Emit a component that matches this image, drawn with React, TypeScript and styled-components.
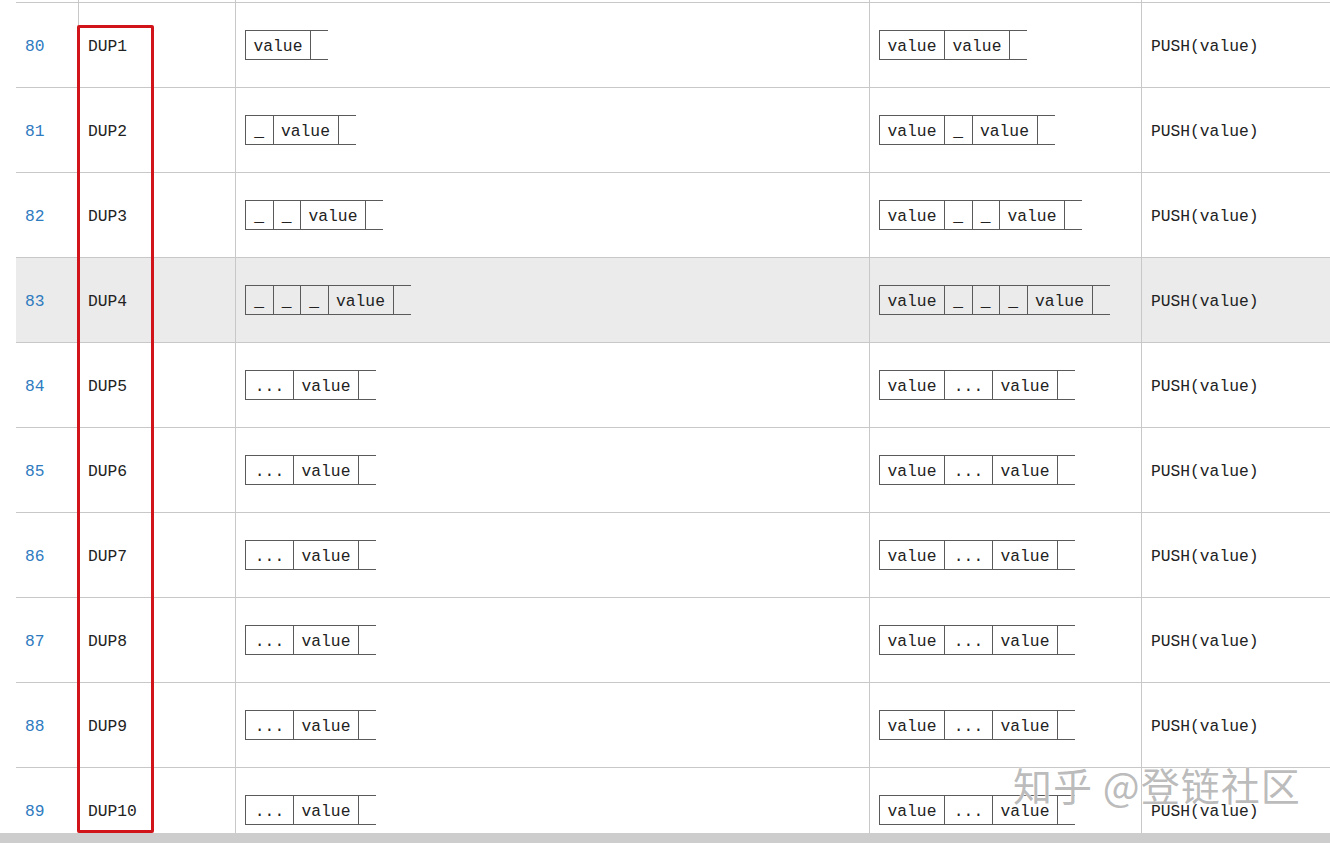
import styled, { createGlobalStyle } from 'styled-components';

const GlobalStyle = createGlobalStyle`
  html, body {
    margin: 0;
    padding: 0;
    background: #fff;
    overflow: hidden;
  }
`;

const Page = styled.div`
  width: 1330px;
  height: 843px;
  display: flex;
  flex-direction: column;
  font-family: "Liberation Mono", "DejaVu Sans Mono", monospace;
  font-size: 16.3px;
  color: #222;
`;

const Viewport = styled.div`
  position: relative;
  height: 833px;
  overflow: hidden;
  padding-left: 16px;
`;

const ScrollBar = styled.div`
  height: 10px;
  background: #cdcdcd;
`;

const Row = styled.div<{ $h?: number; $hl?: boolean }>`
  display: grid;
  grid-template-columns: 62px 157px 634px 272px 1fr;
  height: ${(p) => p.$h ?? 85}px;
  box-sizing: border-box;
  border-bottom: 1px solid #c8c8c8;
  background: ${(p) => (p.$hl ? '#ebebeb' : 'transparent')};
`;

const Cell = styled.div<{ $first?: boolean }>`
  display: flex;
  align-items: center;
  padding-left: 9px;
  padding-top: 2px;
  border-left: ${(p) => (p.$first ? 'none' : '1px solid #c8c8c8')};
  white-space: nowrap;
`;

const Num = styled(Cell)`
  color: #2f7bbf;
`;

const Stack = styled.div`
  display: inline-flex;
  height: 30px;
  margin-top: -2px;
  box-sizing: border-box;
  border-top: 1px solid #5a5a5a;
  border-bottom: 1px solid #5a5a5a;
`;

const Slot = styled.div<{ $w: number }>`
  width: ${(p) => p.$w}px;
  box-sizing: border-box;
  border-left: 1px solid #5a5a5a;
  display: flex;
  align-items: center;
  justify-content: center;
  padding-top: 2px;
`;

const Tail = styled.div`
  width: 17px;
  border-left: 1px solid #5a5a5a;
`;

const Highlight = styled.div`
  position: absolute;
  left: 77px;
  top: 25px;
  width: 77px;
  height: 808px;
  box-sizing: border-box;
  border: 3px solid #d0141a;
  border-radius: 2px;
  pointer-events: none;
`;

const Watermark = styled.div`
  position: absolute;
  left: 1013px;
  top: 756px;
  font-family: "Noto Sans CJK SC", "Noto Sans", sans-serif;
  font-size: 39px;
  letter-spacing: 1px;
  color: rgba(130, 130, 130, 0.55);
  text-shadow: 0 0 1px #fff, 0 0 1px #fff;
  white-space: nowrap;
  pointer-events: none;
`;

const widths: Record<string, number> = { value: 65, _: 27.5, '...': 48 };

const StackView = ({ items }: { items: string[] }) => (
  <Stack>
    {items.map((it, i) => (
      <Slot key={i} $w={widths[it]}>
        {it}
      </Slot>
    ))}
    <Tail />
  </Stack>
);

const rows = [
  { n: '80', op: 'DUP1', gaps: [] as string[] },
  { n: '81', op: 'DUP2', gaps: ['_'] },
  { n: '82', op: 'DUP3', gaps: ['_', '_'] },
  { n: '83', op: 'DUP4', gaps: ['_', '_', '_'] },
  { n: '84', op: 'DUP5', gaps: ['...'] },
  { n: '85', op: 'DUP6', gaps: ['...'] },
  { n: '86', op: 'DUP7', gaps: ['...'] },
  { n: '87', op: 'DUP8', gaps: ['...'] },
  { n: '88', op: 'DUP9', gaps: ['...'] },
  { n: '89', op: 'DUP10', gaps: ['...'] },
];

export default function App() {
  return (
    <Page>
      <GlobalStyle />
      <Viewport>
        <Row $h={3}>
          <Cell $first />
          <Cell />
          <Cell />
          <Cell />
          <Cell />
        </Row>
        {rows.map((r) => (
          <Row key={r.n} $hl={r.n === '83'}>
            <Num $first>{r.n}</Num>
            <Cell>{r.op}</Cell>
            <Cell>
              <StackView items={[...r.gaps, 'value']} />
            </Cell>
            <Cell>
              <StackView items={['value', ...r.gaps, 'value']} />
            </Cell>
            <Cell>PUSH(value)</Cell>
          </Row>
        ))}
        <Highlight />
        <Watermark>知乎 @登链社区</Watermark>
      </Viewport>
      <ScrollBar />
    </Page>
  );
}
